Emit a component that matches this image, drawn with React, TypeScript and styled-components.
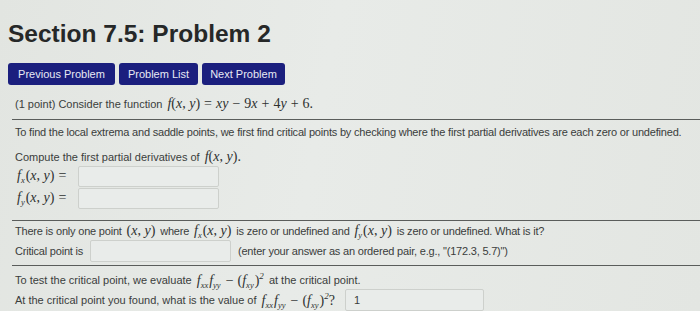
import { createGlobalStyle, styled } from "styled-components";

const GlobalStyle = createGlobalStyle`
  html, body {
    margin: 0;
    padding: 0;
    background: #e4e7e3;
  }
  body {
    font-family: "Liberation Sans", Arial, sans-serif;
    color: #3a3d3c;
  }
`;

const Page = styled.div`
  width: 700px;
  height: 311px;
  overflow: hidden;
  padding: 20px 0 0 8px;
  box-sizing: border-box;
  background: linear-gradient(100deg, #e2e5e1 0%, #e8ebe8 45%, #e3e6e2 100%);
`;

const Title = styled.h1`
  margin: 0;
  font-size: 24.5px;
  font-weight: bold;
  color: #262828;
  line-height: 28px;
`;

const NavBar = styled.div`
  display: flex;
  gap: 4px;
  margin-top: 15px;
`;

const NavButton = styled.button<{ $w: number }>`
  width: ${(p) => p.$w}px;
  height: 22px;
  border: none;
  border-radius: 3px;
  background: #1b1f7e;
  color: #e8e9f4;
  font-family: "Liberation Sans", Arial, sans-serif;
  font-size: 11px;
  padding: 0;
`;

const Problem = styled.div`
  margin-top: 10px;
  padding-left: 7px;
  font-size: 11px;
`;

const Line = styled.div<{ $h?: number; $tight?: boolean }>`
  display: flex;
  align-items: center;
  height: ${(p) => p.$h ?? 18}px;
  white-space: nowrap;
  letter-spacing: ${(p) => (p.$tight ? "-0.2px" : "normal")};
`;

const Rule = styled.div<{ $top: number; $bottom: number }>`
  height: 1px;
  background: #5a5d5b;
  margin: ${(p) => p.$top}px 0 ${(p) => p.$bottom}px -3px;
`;

const Gap = styled.div<{ $h: number }>`
  height: ${(p) => p.$h}px;
`;

const M = styled.span`
  font-family: "Liberation Serif", "DejaVu Serif", serif;
  font-style: italic;
  font-size: 14px;
  color: #2e3130;
  margin: 0 2px;
  letter-spacing: normal;
  sub {
    font-size: 8.5px;
    vertical-align: -3px;
    margin-right: 1px;
  }
  sup {
    font-size: 9px;
    vertical-align: 6px;
  }
`;

const R = styled.span`
  font-style: normal;
`;

const Op = styled.span`
  font-style: normal;
  margin: 0 4px;
`;

const Field = styled.div<{ $w: number; $h?: number; $ml?: number }>`
  width: ${(p) => p.$w}px;
  height: ${(p) => p.$h ?? 21}px;
  border: 1px solid #cdd0cc;
  border-radius: 2px;
  background: #e9ecea;
  box-sizing: border-box;
  margin-left: ${(p) => p.$ml ?? 4}px;
  font-size: 11px;
  padding-left: 8px;
  display: flex;
  align-items: center;
`;

const Note = styled.span`
  margin-left: 7px;
`;

function XY() {
  return (
    <>
      <R>(</R>x<R>, </R>y<R>)</R>
    </>
  );
}

export default function App() {
  return (
    <>
      <GlobalStyle />
      <Page>
        <Title>Section 7.5: Problem 2</Title>
        <NavBar>
          <NavButton $w={107}>Previous Problem</NavButton>
          <NavButton $w={79}>Problem List</NavButton>
          <NavButton $w={83}>Next Problem</NavButton>
        </NavBar>
        <Problem>
          <Line>
            (1 point) Consider the function&nbsp;
            <M>
              f<XY />
              <Op>=</Op>xy<Op>−</Op>
              <R>9</R>x<Op>+</Op>
              <R>4</R>y<Op>+</Op>
              <R>6.</R>
            </M>
          </Line>
          <Rule $top={6} $bottom={3} />
          <Line $tight>
            To find the local extrema and saddle points, we first find critical points by checking where the first partial derivatives are each zero or undefined.
          </Line>
          <Gap $h={8} />
          <Line $h={16}>
            Compute the first partial derivatives of&nbsp;
            <M>
              f<XY />
              <R>.</R>
            </M>
          </Line>
          <Line $h={22}>
            <M>
              f<sub>x</sub>
              <XY />
              <Op>=</Op>
            </M>
            <Field $w={141} $ml={6} />
          </Line>
          <Line $h={22}>
            <M>
              f<sub>y</sub>
              <XY />
              <Op>=</Op>
            </M>
            <Field $w={141} $ml={6} />
          </Line>
          <Rule $top={11} $bottom={1} />
          <Line $tight>
            There is only one point&nbsp;
            <M>
              <XY />
            </M>
            &nbsp;where&nbsp;
            <M>
              f<sub>x</sub>
              <XY />
            </M>
            &nbsp;is zero or undefined and&nbsp;
            <M>
              f<sub>y</sub>
              <XY />
            </M>
            &nbsp;is zero or undefined. What is it?
          </Line>
          <Line $h={22} $tight>
            Critical point is&nbsp;
            <Field $w={141} $h={22} />
            <Note>(enter your answer as an ordered pair, e.g., "(172.3, 5.7)")</Note>
          </Line>
          <Rule $top={3} $bottom={5} />
          <Line>
            To test the critical point, we evaluate&nbsp;
            <M>
              f<sub>xx</sub>f<sub>yy</sub>
              <Op>−</Op>
              <R>(</R>f<sub>xy</sub>
              <R>)</R>
              <sup>2</sup>
            </M>
            &nbsp;at the critical point.
          </Line>
          <Line $h={22}>
            At the critical point you found, what is the value of&nbsp;
            <M>
              f<sub>xx</sub>f<sub>yy</sub>
              <Op>−</Op>
              <R>(</R>f<sub>xy</sub>
              <R>)</R>
              <sup>2</sup>
              <R>?</R>
            </M>
            <Field $w={139} $h={22} $ml={8}>
              1
            </Field>
          </Line>
        </Problem>
      </Page>
    </>
  );
}
